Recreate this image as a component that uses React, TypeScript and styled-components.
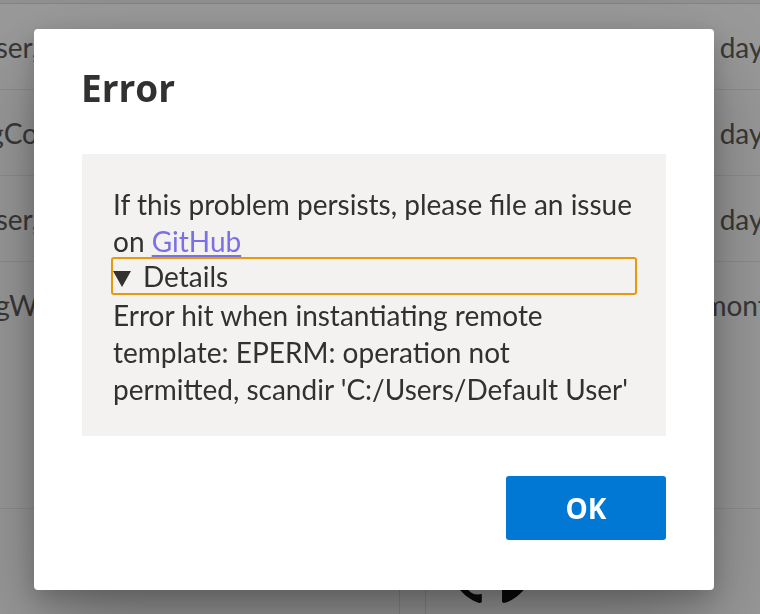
import React from "react";
import styled, { createGlobalStyle } from "styled-components";
import { SiGithub } from "react-icons/si";

const GlobalStyle = createGlobalStyle`
  html, body { margin: 0; padding: 0; }
  body {
    width: 760px;
    height: 614px;
    overflow: hidden;
    background: #ffffff;
    font-family: "Lato", "Open Sans", sans-serif;
  }
`;

/* ---------- background page ---------- */

const Page = styled.div`
  width: 760px;
  height: 614px;
  overflow: hidden;
  background: #ffffff;
  color: #605e5c;
  font-family: "Lato", sans-serif;
  font-size: 28px;
`;

const TopStrip = styled.div`
  height: 3px;
  background: #f0f0f0;
  border-bottom: 1px solid #dedcda;
`;

const List = styled.div`
  display: flex;
  flex-direction: column;
`;

const ListRow = styled.div`
  box-sizing: border-box;
  height: 86px;
  border-bottom: 1px solid #edebe9;
  display: grid;
  grid-template-columns: 38px 1fr 80px;
  align-items: center;
  white-space: nowrap;
  &:last-child {
    border-bottom: none;
  }
`;

const NameCell = styled.div`
  display: flex;
  justify-content: flex-end;
  overflow: hidden;
`;

const TimeCell = styled.div`
  grid-column: 3;
  width: 140px;
`;

const RowSpacer = styled.div`
  height: 160px;
`;

const Cards = styled.div`
  border-top: 1px solid #edebe9;
  display: grid;
  grid-template-columns: 400px 1fr;
  column-gap: 25px;
  height: 120px;
`;

const Card = styled.div<{ $edge: "right" | "left" }>`
  ${(p) => (p.$edge === "right" ? "border-right: 1px solid #e6e4e2;" : "border-left: 1px solid #e6e4e2;")}
  padding: 13px 0 0 25px;
  color: #111;
`;

/* ---------- dialog ---------- */

const Overlay = styled.div`
  position: fixed;
  inset: 0;
  background: rgba(0, 0, 0, 0.4);
  display: flex;
  align-items: flex-start;
  justify-content: flex-start;
  padding: 29px 0 0 34px;
`;

const Dialog = styled.div`
  box-sizing: border-box;
  width: 680px;
  height: 561px;
  background: #ffffff;
  border-radius: 4px;
  box-shadow: 0 40px 90px rgba(0, 0, 0, 0.3), 0 8px 24px rgba(0, 0, 0, 0.2);
  padding: 34px 48px 50px 48px;
  display: flex;
  flex-direction: column;
  color: #323130;
`;

const Title = styled.h1`
  margin: 0 0 41px -1px;
  font-family: "Open Sans", sans-serif;
  font-weight: 700;
  font-size: 37px;
  line-height: 50px;
  color: #323130;
`;

const MessageBox = styled.div`
  box-sizing: border-box;
  height: 282px;
  background: #f3f2f1;
  padding: 32px 31px 28px;
  font-family: "Lato", sans-serif;
  font-size: 28px;
  line-height: 37px;
  color: #323130;
`;

const Paragraph = styled.p`
  margin: 0;
`;

const Link = styled.a`
  color: #7b6fe6;
  text-decoration: underline;
  text-underline-offset: 3px;
  text-decoration-thickness: 2px;
`;

const Details = styled.details`
  margin: 0;
`;

const Summary = styled.summary`
  display: block;
  list-style: none;
  margin: -1px 0 4px;
  line-height: 34px;
  outline: 2px solid #e69a0b;
  border-radius: 1px;
  cursor: pointer;
  &::-webkit-details-marker { display: none; }
`;

const Marker = styled.span`
  display: inline-block;
  width: 0;
  height: 0;
  border-left: 9px solid transparent;
  border-right: 9px solid transparent;
  border-top: 16px solid #323130;
  margin: 0 12px 0 0;
  vertical-align: baseline;
`;

const DetailText = styled.div`
  margin: 0;
`;

const Actions = styled.div`
  margin-top: 40px;
  display: flex;
  justify-content: flex-end;
`;

const PrimaryButton = styled.button`
  width: 160px;
  height: 64px;
  border: none;
  border-radius: 3px;
  background: #0078d4;
  color: #ffffff;
  font-family: "Open Sans", sans-serif;
  font-weight: 700;
  font-size: 28px;
  cursor: pointer;
  padding: 0;
`;

const rows = [
  { name: "Default User,", time: "12 days ago" },
  { name: "SettingCo", time: "13 days ago" },
  { name: "Default User,", time: "14 days ago" },
  { name: "SettingW", time: "1 month ago" },
];

export default function App() {
  return (
    <>
      <GlobalStyle />
      <Page>
        <TopStrip />
        <List>
          {rows.map((r, i) => (
            <ListRow key={i}>
              <NameCell>
                <span>{r.name}</span>
              </NameCell>
              <span />
              <TimeCell>{r.time}</TimeCell>
            </ListRow>
          ))}
        </List>
        <RowSpacer />
        <Cards>
          <Card $edge="right" />
          <Card $edge="left">
            <SiGithub size={82} />
          </Card>
        </Cards>
      </Page>
      <Overlay>
        <Dialog role="dialog" aria-labelledby="err-title">
          <Title id="err-title">Error</Title>
          <MessageBox>
            <Paragraph>
              If this problem persists, please file an issue on <Link href="#">GitHub</Link>
            </Paragraph>
            <Details open>
              <Summary>
                <Marker />
                Details
              </Summary>
              <DetailText>
                Error hit when instantiating remote
                <br />
                template: EPERM: operation not
                <br />
                permitted, scandir 'C:/Users/Default User'
              </DetailText>
            </Details>
          </MessageBox>
          <Actions>
            <PrimaryButton>OK</PrimaryButton>
          </Actions>
        </Dialog>
      </Overlay>
    </>
  );
}
